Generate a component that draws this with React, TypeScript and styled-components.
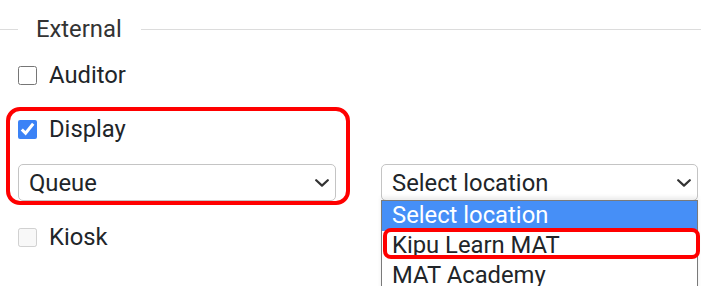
import styled, { createGlobalStyle } from 'styled-components';

const GlobalStyle = createGlobalStyle`
  html, body {
    margin: 0;
    padding: 0;
    background: #fff;
    overflow: hidden;
  }
  body {
    font-family: Roboto, "Liberation Sans", Arial, sans-serif;
    color: #212529;
  }
`;

const Wrapper = styled.div`
  width: 701px;
  height: 286px;
  padding-top: 16px;
  box-sizing: border-box;
`;

const Legend = styled.div`
  display: flex;
  align-items: center;
  height: 27px;
`;

const Rule = styled.div<{ $grow?: boolean }>`
  height: 1px;
  background: #dcdcdc;
  width: ${(p) => (p.$grow ? 'auto' : '18px')};
  flex: ${(p) => (p.$grow ? '1' : 'none')};
`;

const LegendText = styled.span`
  font-size: 23.8px;
  line-height: 27px;
  color: #333;
  padding: 0 19px 0 18px;
`;

const Body = styled.div`
  display: grid;
  grid-template-columns: 318px 317px;
  grid-template-rows: 27px 54px 58px 50px;
  column-gap: 45px;
  margin-top: 19px;
  padding-left: 18px;
`;

const CheckRow = styled.label<{ $row: number }>`
  grid-row: ${(p) => p.$row};
  grid-column: 1;
  align-self: end;
  display: flex;
  align-items: center;
  gap: 12px;
  height: 27px;
  font-size: 23.8px;
  line-height: 27px;
  color: #212529;
  position: relative;
  z-index: 1;
`;

const Check = styled.input.attrs({ type: 'checkbox' })`
  width: 19px;
  height: 19px;
  margin: 0;
  accent-color: #3b82f6;
`;

const Highlight = styled.div`
  grid-row: 2 / 4;
  grid-column: 1;
  margin: 18px -14px -4px -12px;
  border: 4px solid #ff0000;
  border-radius: 14px;
  pointer-events: none;
  z-index: 2;
`;

const SelectBox = styled.div<{ $col: number }>`
  grid-row: 3;
  grid-column: ${(p) => p.$col};
  align-self: end;
  position: relative;
  height: 37px;
`;

const NativeSelect = styled.select`
  appearance: none;
  width: 100%;
  height: 37px;
  box-sizing: border-box;
  border: 1px solid #c4c4c4;
  border-radius: 5px;
  background: #fff;
  padding: 0 32px 0 10px;
  font-family: inherit;
  font-size: 23.8px;
  color: #212529;
  outline: none;
`;

const Chevron = styled.svg`
  position: absolute;
  right: 7px;
  top: 50%;
  transform: translateY(-50%);
  pointer-events: none;
`;

const Popup = styled.ul`
  position: absolute;
  top: 36px;
  left: 0;
  right: 0;
  margin: 0;
  padding: 0;
  list-style: none;
  border: 1px solid #7a7a7a;
  background: #fff;
  box-shadow: 0 -3px 4px rgba(0, 0, 0, 0.08);
  z-index: 3;
`;

const Option = styled.li<{ $active?: boolean; $marked?: boolean }>`
  position: relative;
  height: 30px;
  line-height: 28px;
  padding: 0 0 2px 10px;
  box-sizing: border-box;
  font-size: 23.8px;
  white-space: nowrap;
  background: ${(p) => (p.$active ? '#468ff7' : '#fff')};
  color: ${(p) => (p.$active ? '#fff' : '#212529')};

  ${(p) =>
    p.$marked &&
    `
    &::after {
      content: '';
      position: absolute;
      top: -3px;
      bottom: 2px;
      left: 1px;
      right: -3px;
      border: 4px solid #ff0000;
      border-radius: 8px;
    }
  `}
`;

const ChevronIcon = () => (
  <Chevron width="14" height="8" viewBox="0 0 14 8">
    <polyline
      points="1.2,1.2 7,6.6 12.8,1.2"
      fill="none"
      stroke="#333"
      strokeWidth="2.2"
      strokeLinecap="round"
      strokeLinejoin="round"
    />
  </Chevron>
);

const locations = ['Select location', 'Kipu Learn MAT', 'MAT Academy'];

const App = () => {
  return (
    <Wrapper>
      <GlobalStyle />
      <Legend>
        <Rule />
        <LegendText>External</LegendText>
        <Rule $grow />
      </Legend>
      <Body>
        <CheckRow $row={1}>
          <Check />
          Auditor
        </CheckRow>
        <CheckRow $row={2}>
          <Check defaultChecked />
          Display
        </CheckRow>
        <Highlight />
        <SelectBox $col={1}>
          <NativeSelect defaultValue="queue">
            <option value="queue">Queue</option>
          </NativeSelect>
          <ChevronIcon />
        </SelectBox>
        <SelectBox $col={2}>
          <NativeSelect defaultValue="">
            <option value="">Select location</option>
          </NativeSelect>
          <ChevronIcon />
          <Popup>
            {locations.map((name, i) => (
              <Option key={name} $active={i === 0} $marked={i === 1}>
                {name}
              </Option>
            ))}
          </Popup>
        </SelectBox>
        <CheckRow $row={4}>
          <Check disabled />
          Kiosk
        </CheckRow>
      </Body>
    </Wrapper>
  );
};

export default App;
